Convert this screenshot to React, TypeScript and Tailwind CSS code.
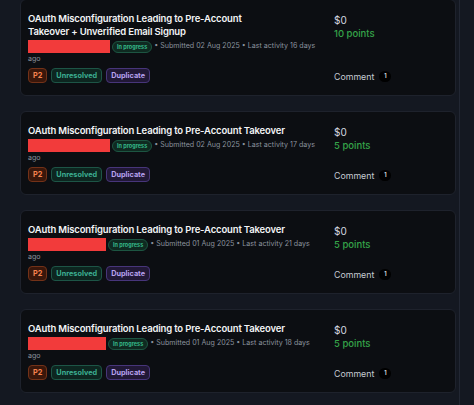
import React from 'react';

type Report = {
  title: React.ReactNode;
  submitted: string;
  activity: string;
  points: number;
};

const reports: Report[] = [
  {
    title: (
      <>
        OAuth Misconfiguration Leading to Pre-Account
        <br />
        Takeover + Unverified Email Signup
      </>
    ),
    submitted: '02 Aug 2025',
    activity: '16 days',
    points: 10,
  },
  { title: 'OAuth Misconfiguration Leading to Pre-Account Takeover', submitted: '02 Aug 2025', activity: '17 days', points: 5 },
  { title: 'OAuth Misconfiguration Leading to Pre-Account Takeover', submitted: '01 Aug 2025', activity: '21 days', points: 5 },
  { title: 'OAuth Misconfiguration Leading to Pre-Account Takeover', submitted: '01 Aug 2025', activity: '18 days', points: 5 },
];

const ReportCard = ({ report, redWidth }: { report: Report; redWidth: string }) => (
  <div className="flex w-[436px] shrink-0 rounded-md border border-[#1e222c] bg-[#0c0e12] pl-[7px] pt-[12px] pb-[12px]">
    <div className="w-[289px] shrink-0">
      <h3 className="text-[9.5px] font-semibold leading-[13px] tracking-[-0.15px] text-[#f3f4f6]">{report.title}</h3>
      <p className="mt-[2px] text-[7.1px] leading-[12px] text-[#8b929e]">
        <span className={`inline-block h-[13px] ${redWidth} bg-[#f23b3b] align-middle`} />
        <span className="ml-[2px] inline-block rounded-full border border-[#1d5542] bg-[#0f2a21] px-[4px] text-[5.5px] font-bold leading-[10px] text-[#35b889] align-middle">
          In progress
        </span>
        {' '}• Submitted {report.submitted} • Last activity {report.activity} ago
      </p>
      <div className="mt-[3px] flex gap-[4px]">
        <span className="rounded-[4px] border border-[#733218] bg-[#3a170b] px-[4px] text-[7.3px] font-bold leading-[13px] text-[#f5834f]">
          P2
        </span>
        <span className="rounded-[4px] border border-[#1d5546] bg-[#0d2620] px-[4px] text-[7.3px] font-bold leading-[13px] text-[#3cae91]">
          Unresolved
        </span>
        <span className="rounded-[4px] border border-[#47357a] bg-[#211836] px-[4px] text-[7.3px] font-bold leading-[13px] text-[#b7a1ee]">
          Duplicate
        </span>
      </div>
    </div>
    <div className="ml-[17px] flex flex-col pt-[1px]">
      <div className="text-[10px] leading-[14px] text-[#d5d9e0]">$0</div>
      <div className="text-[9.5px] font-medium leading-[14px] text-[#35a449]">{report.points} points</div>
      <div className="mt-auto flex items-center gap-[5px] text-[8.8px] text-[#c6cbd3]">
        Comment
        <span className="flex h-[11px] w-[12px] items-center justify-center rounded-full bg-[#000000] text-[6.5px] font-semibold text-[#d1d5db]">
          1
        </span>
      </div>
    </div>
  </div>
);

export default function App() {
  return (
    <div
      className="relative h-[405px] w-[474px] overflow-hidden bg-[#141821] pl-[20px]"
      style={{ fontFamily: 'Inter, "Noto Sans", sans-serif' }}
    >
      <div className="-mt-[1px] flex flex-col gap-[15px]">
        {reports.map((r, i) => (
          <ReportCard key={i} report={r} redWidth={i < 2 ? 'w-[82px]' : 'w-[78px]'} />
        ))}
      </div>
      <div className="absolute right-[14px] top-0 h-full w-px bg-[#222733]" />
    </div>
  );
}
